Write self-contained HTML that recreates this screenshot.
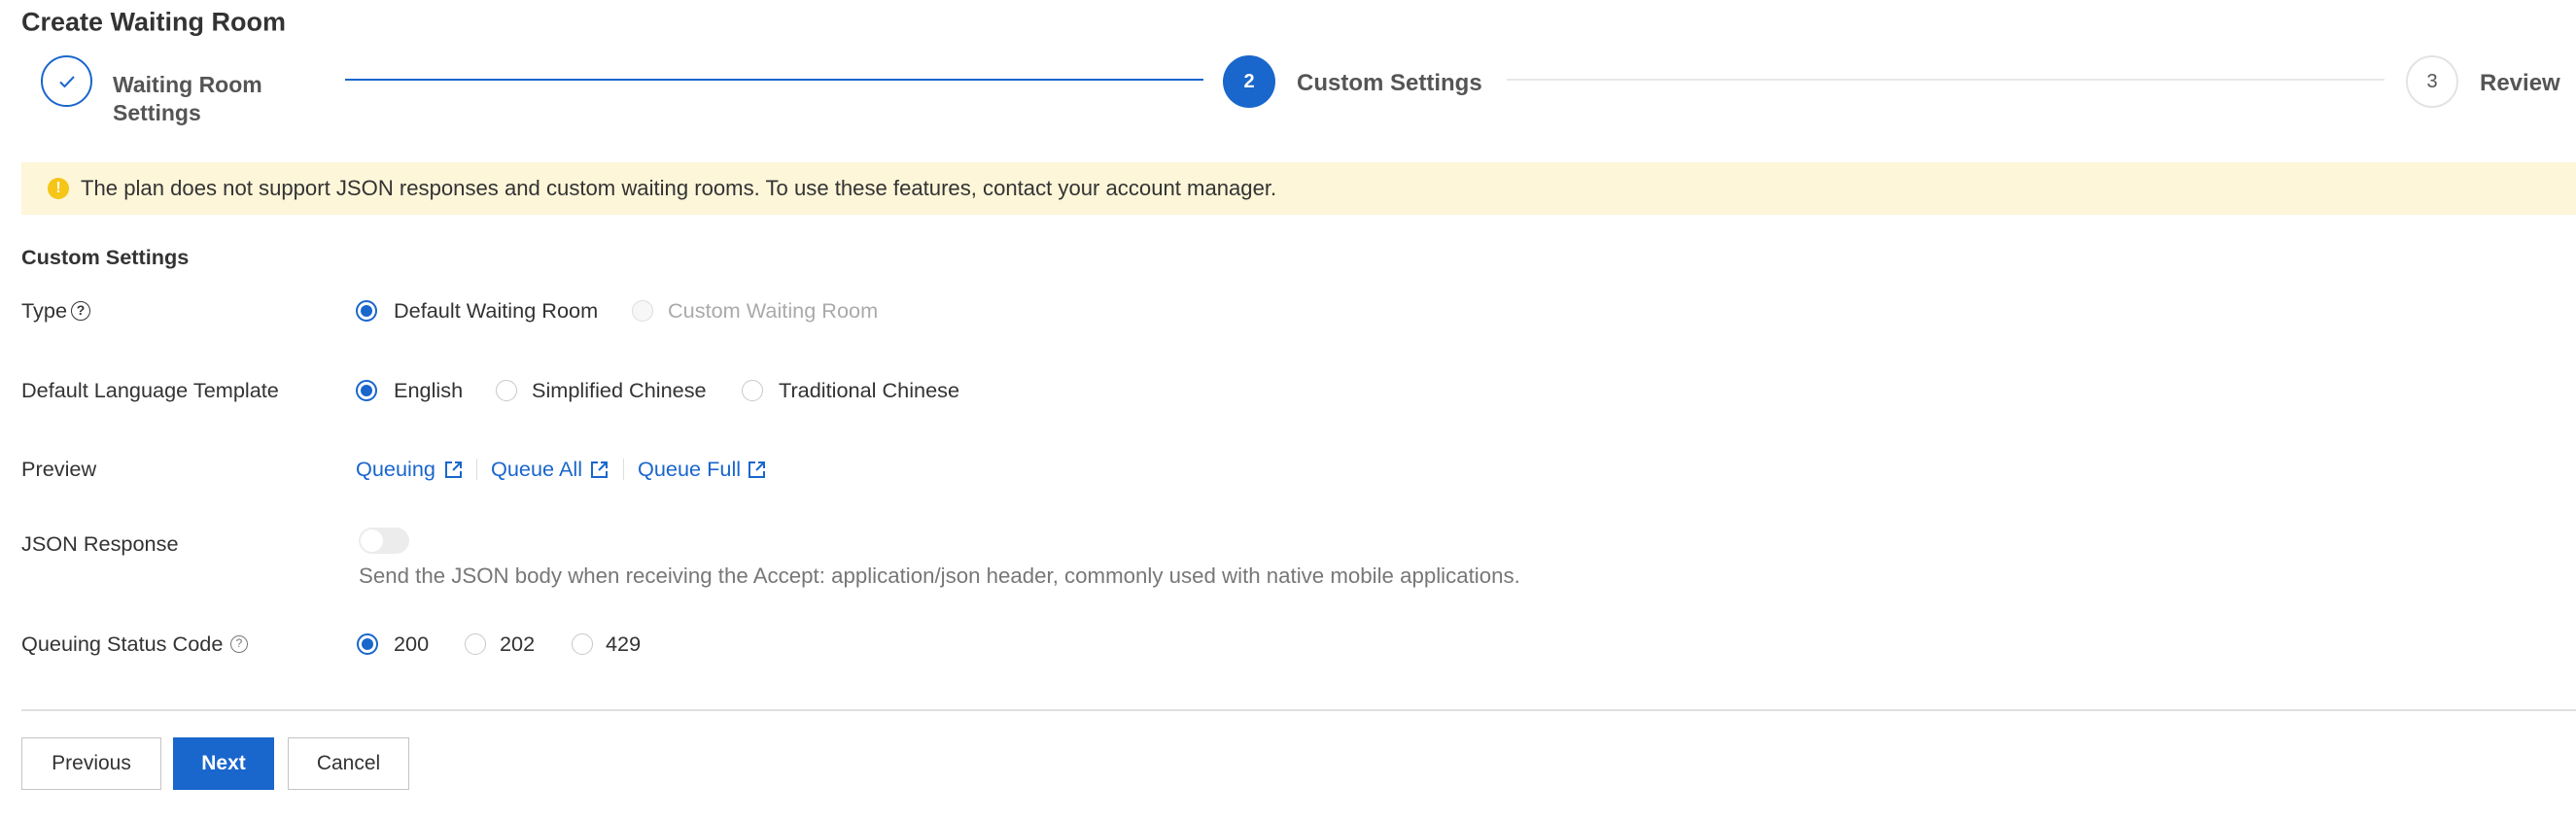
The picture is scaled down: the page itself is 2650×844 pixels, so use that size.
<!DOCTYPE html>
<html><head><meta charset="utf-8"><style>
*{box-sizing:border-box;margin:0;padding:0}
body{width:2650px;height:844px;background:#fff;font-family:"Liberation Sans",Arial,sans-serif;color:#333;position:relative;overflow:hidden}
.a{position:absolute;white-space:nowrap}
.lab{font-size:21.7px;color:#333;transform:translateY(-50%)}
.radio{position:absolute;width:22px;height:22px;border-radius:50%;border:1.5px solid #c8c8c8;background:#fff;transform:translateY(-50%)}
.radio.on{border:2px solid #1966cc}
.radio.on::after{content:"";position:absolute;left:3px;top:3px;width:12px;height:12px;border-radius:50%;background:#1966cc}
.link{color:#1966cc;font-size:21.7px;transform:translateY(-50%)}
.btn{position:absolute;top:759px;height:54px;border:1.5px solid #c4c4c4;background:#fff;font-size:21px;display:flex;align-items:center;justify-content:center;color:#333}
</style></head><body>
<div class="a" style="left:22px;top:23px;transform:translateY(-50%);font-size:27px;font-weight:bold;color:#333">Create Waiting Room</div>

<div class="a" style="left:42px;top:57px;width:53px;height:53px;border:2px solid #1966cc;border-radius:50%"></div>
<svg class="a" style="left:57px;top:72px" width="24" height="24" viewBox="0 0 24 24"><path d="M5 12.5l4.5 4.5L19 7" fill="none" stroke="#1966cc" stroke-width="2"/></svg>
<div class="a" style="left:116px;top:73px;font-size:23px;font-weight:bold;color:#555;line-height:29px">Waiting Room<br>Settings</div>
<div class="a" style="left:355px;top:81px;width:883px;height:2px;background:#1966cc"></div>

<div class="a" style="left:1258px;top:57px;width:54px;height:54px;background:#1966cc;border-radius:50%;color:#fff;font-size:20px;font-weight:bold;display:flex;align-items:center;justify-content:center">2</div>
<div class="a" style="left:1334px;top:86px;transform:translateY(-50%);font-size:24px;font-weight:bold;color:#555">Custom Settings</div>
<div class="a" style="left:1550px;top:81px;width:903px;height:2px;background:#e8e8e8"></div>

<div class="a" style="left:2475px;top:57px;width:54px;height:54px;border:2px solid #e3e3e3;border-radius:50%;color:#555;font-size:20px;display:flex;align-items:center;justify-content:center">3</div>
<div class="a" style="left:2551px;top:86px;transform:translateY(-50%);font-size:24px;font-weight:bold;color:#555">Review</div>

<div class="a" style="left:22px;top:167px;width:2628px;height:54px;background:#fdf6d9"></div>
<div class="a" style="left:49px;top:183px;width:22px;height:22px;border-radius:50%;background:#f5c518;color:#fff;font-size:16px;font-weight:bold;text-align:center;line-height:22px">!</div>
<div class="a lab" style="left:83px;top:194px;color:#333;font-size:22.1px">The plan does not support JSON responses and custom waiting rooms. To use these features, contact your account manager.</div>

<div class="a lab" style="left:22px;top:265px;font-weight:bold">Custom Settings</div>

<div class="a lab" style="left:22px;top:320px">Type</div>
<div class="a" style="left:73px;top:310px;width:20px;height:20px;border:1.5px solid #333;border-radius:50%;font-size:14px;text-align:center;line-height:17px;font-weight:bold">?</div>
<div class="radio on" style="left:366px;top:320px"></div>
<div class="a lab" style="left:405px;top:320px">Default Waiting Room</div>
<div class="radio" style="left:650px;top:320px;background:#f7f7f7;border-color:#ddd"></div>
<div class="a lab" style="left:687px;top:320px;color:#aaa">Custom Waiting Room</div>

<div class="a lab" style="left:22px;top:402px">Default Language Template</div>
<div class="radio on" style="left:366px;top:402px"></div>
<div class="a lab" style="left:405px;top:402px">English</div>
<div class="radio" style="left:510px;top:402px"></div>
<div class="a lab" style="left:547px;top:402px">Simplified Chinese</div>
<div class="radio" style="left:763px;top:402px"></div>
<div class="a lab" style="left:801px;top:402px">Traditional Chinese</div>

<div class="a lab" style="left:22px;top:483px">Preview</div>
<div class="a link" style="left:366px;top:483px">Queuing</div>
<svg class="a" style="left:457px;top:474px" width="19" height="19" viewBox="0 0 19 19"><path d="M8 2H2v15h15v-6M11 2h6v6M17 2l-8 8" fill="none" stroke="#1966cc" stroke-width="2"/></svg>
<div class="a" style="left:490px;top:472px;width:1px;height:22px;background:#ddd"></div>
<div class="a link" style="left:505px;top:483px">Queue All</div>
<svg class="a" style="left:607px;top:474px" width="19" height="19" viewBox="0 0 19 19"><path d="M8 2H2v15h15v-6M11 2h6v6M17 2l-8 8" fill="none" stroke="#1966cc" stroke-width="2"/></svg>
<div class="a" style="left:641px;top:472px;width:1px;height:22px;background:#ddd"></div>
<div class="a link" style="left:656px;top:483px">Queue Full</div>
<svg class="a" style="left:769px;top:474px" width="19" height="19" viewBox="0 0 19 19"><path d="M8 2H2v15h15v-6M11 2h6v6M17 2l-8 8" fill="none" stroke="#1966cc" stroke-width="2"/></svg>

<div class="a lab" style="left:22px;top:560px">JSON Response</div>
<div class="a" style="left:369px;top:543px;width:52px;height:27px;border-radius:14px;background:#ececec"></div>
<div class="a" style="left:371px;top:545px;width:23px;height:23px;border-radius:50%;background:#fff"></div>
<div class="a lab" style="left:369px;top:593px;color:#777;font-size:22.25px">Send the JSON body when receiving the Accept: application/json header, commonly used with native mobile applications.</div>

<div class="a lab" style="left:22px;top:663px">Queuing Status Code</div>
<div class="a" style="left:237px;top:654px;width:18px;height:18px;border:1.5px solid #777;border-radius:50%;font-size:12px;text-align:center;line-height:15px;color:#777">?</div>
<div class="radio on" style="left:367px;top:663px"></div>
<div class="a lab" style="left:405px;top:663px">200</div>
<div class="radio" style="left:478px;top:663px"></div>
<div class="a lab" style="left:514px;top:663px">202</div>
<div class="radio" style="left:588px;top:663px"></div>
<div class="a lab" style="left:623px;top:663px">429</div>

<div class="a" style="left:22px;top:730px;width:2628px;height:2px;background:#e0e0e0"></div>

<div class="btn" style="left:22px;width:144px">Previous</div>
<div class="btn" style="left:178px;width:104px;background:#1966cc;border-color:#1966cc;color:#fff;font-weight:bold">Next</div>
<div class="btn" style="left:296px;width:125px">Cancel</div>
</body></html>
